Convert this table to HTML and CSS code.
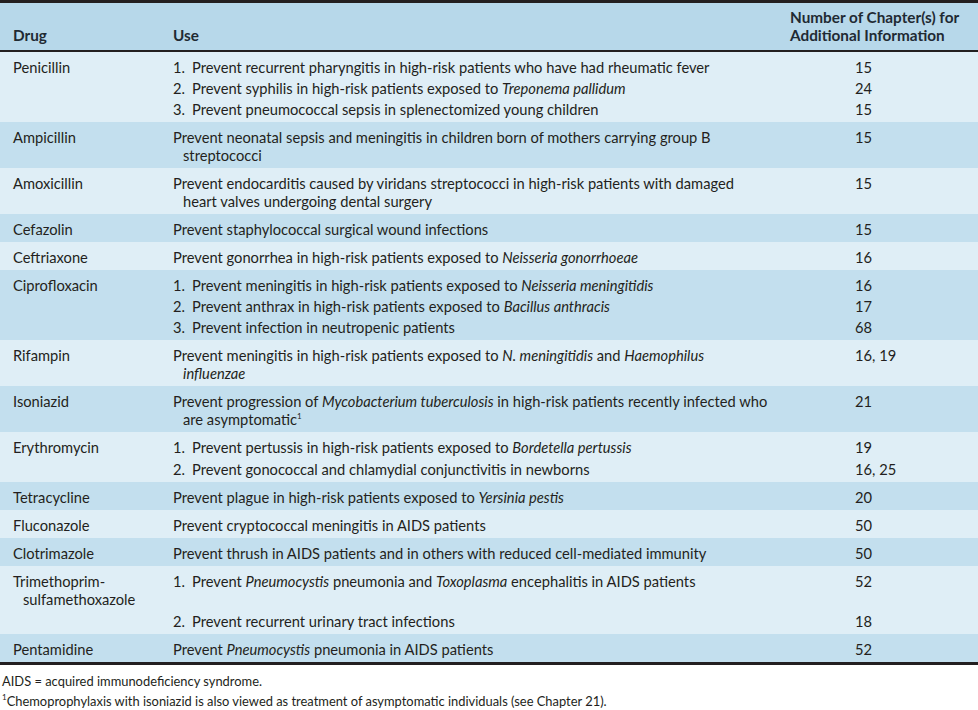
FILE: index.html
```html
<!DOCTYPE html>
<html>
<head>
<meta charset="utf-8">
<link rel="stylesheet" href="styles.css">
</head>
<body>
<table class="drugs">
  <colgroup><col class="c-drug"><col class="c-use"><col class="c-num"></colgroup>
  <thead>
    <tr><th class="drug">Drug</th><th class="use">Use</th><th class="num">Number of Chapter(s) for<br>Additional Information</th></tr>
  </thead>
  <tbody class="light">
    <tr class="first"><td class="drug">Penicillin</td><td class="use"><span class="n">1.</span>Prevent recurrent pharyngitis in high-risk patients who have had rheumatic fever</td><td class="num">15</td></tr>
    <tr><td class="drug"></td><td class="use"><span class="n">2.</span>Prevent syphilis in high-risk patients exposed to <i>Treponema pallidum</i></td><td class="num">24</td></tr>
    <tr class="last"><td class="drug"></td><td class="use"><span class="n">3.</span>Prevent pneumococcal sepsis in splenectomized young children</td><td class="num">15</td></tr>
  </tbody>
  <tbody class="dark">
    <tr class="first last"><td class="drug">Ampicillin</td><td class="use"><div class="hang">Prevent neonatal sepsis and meningitis in children born of mothers carrying group B<br>streptococci</div></td><td class="num">15</td></tr>
  </tbody>
  <tbody class="light">
    <tr class="first last"><td class="drug">Amoxicillin</td><td class="use"><div class="hang">Prevent endocarditis caused by viridans streptococci in high-risk patients with damaged<br>heart valves undergoing dental surgery</div></td><td class="num">15</td></tr>
  </tbody>
  <tbody class="dark">
    <tr class="first last"><td class="drug">Cefazolin</td><td class="use">Prevent staphylococcal surgical wound infections</td><td class="num">15</td></tr>
  </tbody>
  <tbody class="light">
    <tr class="first last"><td class="drug">Ceftriaxone</td><td class="use">Prevent gonorrhea in high-risk patients exposed to <i>Neisseria gonorrhoeae</i></td><td class="num">16</td></tr>
  </tbody>
  <tbody class="dark">
    <tr class="first"><td class="drug">Ciprofloxacin</td><td class="use"><span class="n">1.</span>Prevent meningitis in high-risk patients exposed to <i>Neisseria meningitidis</i></td><td class="num">16</td></tr>
    <tr><td class="drug"></td><td class="use"><span class="n">2.</span>Prevent anthrax in high-risk patients exposed to <i>Bacillus anthracis</i></td><td class="num">17</td></tr>
    <tr class="last"><td class="drug"></td><td class="use"><span class="n">3.</span>Prevent infection in neutropenic patients</td><td class="num">68</td></tr>
  </tbody>
  <tbody class="light">
    <tr class="first last"><td class="drug">Rifampin</td><td class="use"><div class="hang">Prevent meningitis in high-risk patients exposed to <i>N. meningitidis</i> and <i>Haemophilus</i><br><i>influenzae</i></div></td><td class="num">16, 19</td></tr>
  </tbody>
  <tbody class="dark">
    <tr class="first last"><td class="drug">Isoniazid</td><td class="use"><div class="hang">Prevent progression of <i>Mycobacterium tuberculosis</i> in high-risk patients recently infected who<br>are asymptomatic<sup>1</sup></div></td><td class="num">21</td></tr>
  </tbody>
  <tbody class="light wide">
    <tr class="first"><td class="drug">Erythromycin</td><td class="use"><span class="n">1.</span>Prevent pertussis in high-risk patients exposed to <i>Bordetella pertussis</i></td><td class="num">19</td></tr>
    <tr class="last"><td class="drug"></td><td class="use"><span class="n">2.</span>Prevent gonococcal and chlamydial conjunctivitis in newborns</td><td class="num">16, 25</td></tr>
  </tbody>
  <tbody class="dark">
    <tr class="first last"><td class="drug">Tetracycline</td><td class="use">Prevent plague in high-risk patients exposed to <i>Yersinia pestis</i></td><td class="num">20</td></tr>
  </tbody>
  <tbody class="light">
    <tr class="first last"><td class="drug">Fluconazole</td><td class="use">Prevent cryptococcal meningitis in AIDS patients</td><td class="num">50</td></tr>
  </tbody>
  <tbody class="dark">
    <tr class="first last"><td class="drug">Clotrimazole</td><td class="use">Prevent thrush in AIDS patients and in others with reduced cell-mediated immunity</td><td class="num">50</td></tr>
  </tbody>
  <tbody class="light wide">
    <tr class="first"><td class="drug"><div class="hang">Trimethoprim-<br>sulfamethoxazole</div></td><td class="use"><span class="n">1.</span>Prevent <i>Pneumocystis</i> pneumonia and <i>Toxoplasma</i> encephalitis in AIDS patients</td><td class="num">52</td></tr>
    <tr class="last"><td class="drug"></td><td class="use"><span class="n">2.</span>Prevent recurrent urinary tract infections</td><td class="num">18</td></tr>
  </tbody>
  <tbody class="dark">
    <tr class="first last"><td class="drug">Pentamidine</td><td class="use">Prevent <i>Pneumocystis</i> pneumonia in AIDS patients</td><td class="num">52</td></tr>
  </tbody>
</table>
<div class="notes">
  <p>AIDS = acquired immunodeficiency syndrome.</p>
  <p><sup>1</sup>Chemoprophylaxis with isoniazid is also viewed as treatment of asymptomatic individuals (see Chapter 21).</p>
</div>
</body>
</html>
```

FILE: styles.css
```css
html, body {
  margin: 0;
  padding: 0;
  background: #ffffff;
}
body {
  font-family: "Lato", "Open Sans", sans-serif;
  font-size: 14.7px;
  color: #231f20;
}
.drugs {
  width: 978px;
  border-collapse: collapse;
  table-layout: fixed;
  border-top: 3px solid #231f20;
  border-bottom: 3px solid #231f20;
}
.c-drug { width: 173px; }
.c-use { width: 617px; }
.c-num { width: 188px; }
.drugs thead tr {
  background: #b7d8ea;
  border-bottom: 2px solid #231f20;
}
.drugs th {
  font-weight: bold;
  font-size: 15.3px;
  color: #1f2a33;
  text-align: left;
  vertical-align: bottom;
  line-height: 18px;
  padding: 5px 0 6px 0;
}
.drugs th.drug { padding-left: 13px; }
.drugs td {
  vertical-align: top;
  line-height: 18px;
  padding: 2px 0 1px 0;
}
.drugs td.drug { padding-left: 13px; }
.drugs td.num { padding-left: 65px; }
.drugs tr.first td { padding-top: 6px; }
.drugs tr.last td { padding-bottom: 4px; }
.drugs .wide tr.last td { padding-top: 3px; }
.light { background: #dfeef6; }
.dark { background: #c3dfee; }
.n {
  display: inline-block;
  width: 19px;
}
.hang {
  padding-left: 10px;
  text-indent: -10px;
}
sup {
  font-size: 8px;
  line-height: 0;
  vertical-align: 6px;
}
.notes {
  padding: 9px 0 0 2px;
  font-size: 12.9px;
}
.notes p {
  margin: 0 0 6px 0;
  line-height: 14px;
}
```
